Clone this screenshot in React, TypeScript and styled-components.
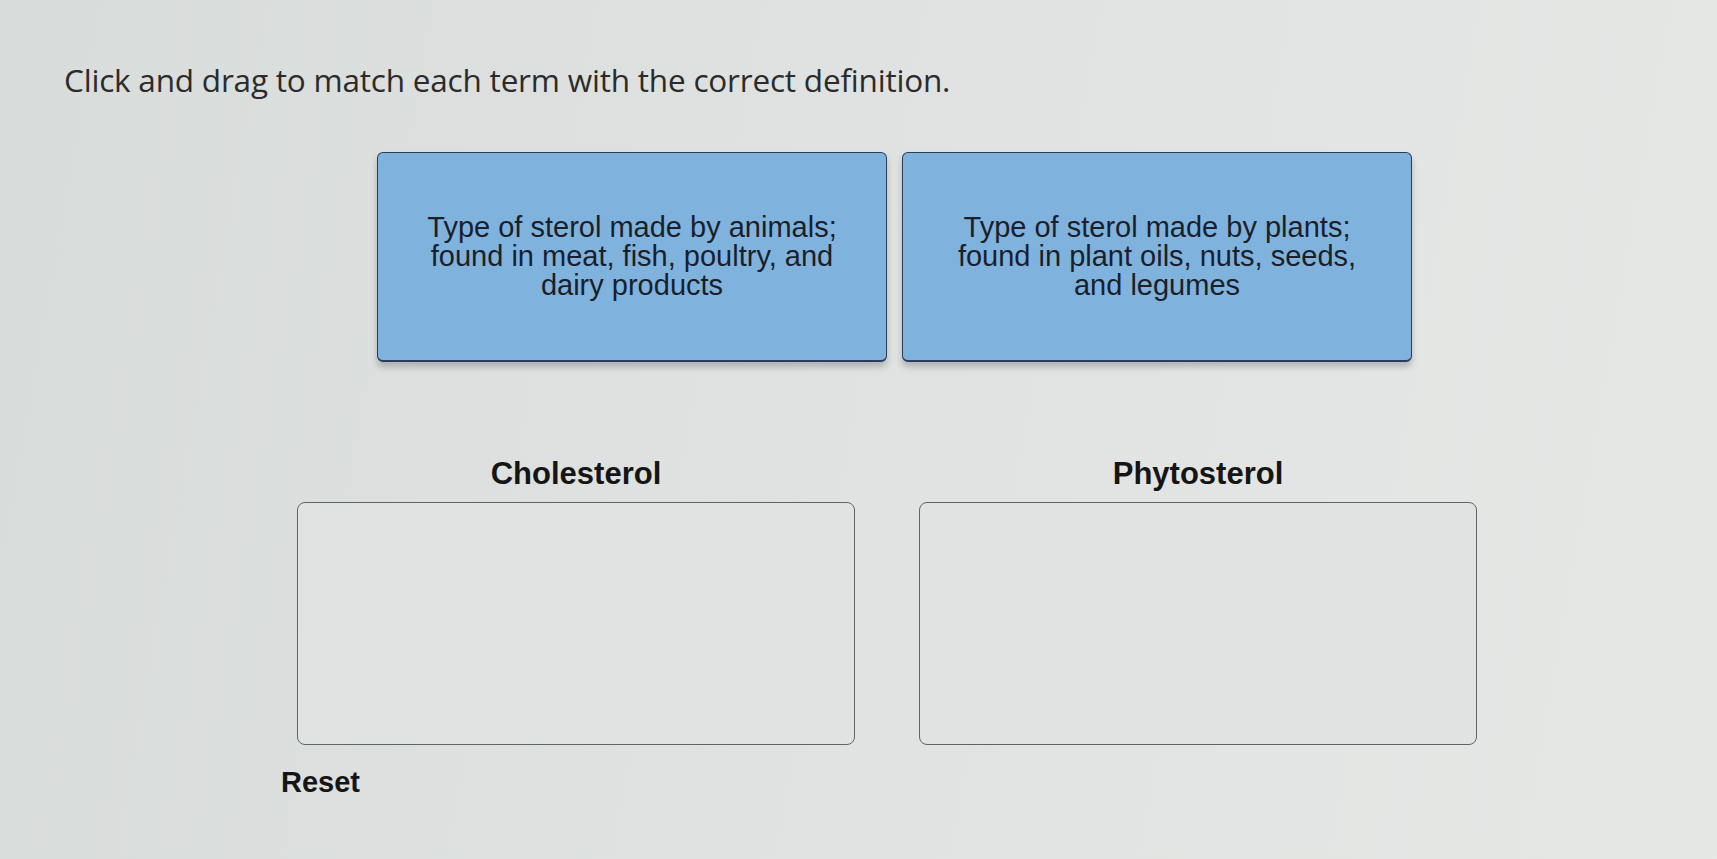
import React from "react";
import styled, { createGlobalStyle } from "styled-components";

const GlobalStyle = createGlobalStyle`
  html, body {
    margin: 0;
    padding: 0;
    background: #dde0de;
  }
  body {
    font-family: "Liberation Sans", Arial, sans-serif;
    color: #1c1c1c;
  }
`;

const Page = styled.div`
  min-height: 859px;
  box-sizing: border-box;
  padding: 60px 0 0 64px;
  background: linear-gradient(100deg, #d8dcda 0%, #e0e3e1 55%, #e6e8e6 100%);
`;

const Prompt = styled.h1`
  margin: 0;
  font-family: "Open Sans", "Liberation Sans", sans-serif;
  font-weight: 400;
  font-size: 31.5px;
  line-height: 40px;
  letter-spacing: -0.2px;
  color: #2b2b2b;
`;

const Choices = styled.div`
  display: flex;
  gap: 15px;
  margin: 52px 0 0 313px;
`;

const ChoiceCard = styled.div`
  width: 510px;
  height: 210px;
  box-sizing: border-box;
  display: flex;
  align-items: center;
  justify-content: center;
  padding: 0 40px;
  background: #80b2de;
  border: 1.5px solid #2b3d5c;
  border-bottom-width: 2px;
  border-radius: 6px;
  box-shadow: 0 5px 6px rgba(90, 95, 100, 0.35);
  text-align: center;
  font-size: 29px;
  line-height: 29px;
  color: #1a1f2a;
  cursor: grab;
`;

const Targets = styled.div`
  display: flex;
  gap: 64px;
  margin: 95px 0 0 233px;
`;

const Target = styled.div`
  width: 558px;
  display: flex;
  flex-direction: column;
  align-items: center;
`;

const Term = styled.div`
  font-weight: 700;
  font-size: 31px;
  line-height: 34px;
  color: #151515;
`;

const DropZone = styled.div`
  width: 100%;
  height: 243px;
  margin-top: 11px;
  box-sizing: border-box;
  border: 1.5px solid #5f6467;
  border-radius: 8px;
  background: #e0e3e1;
`;

const ResetButton = styled.button`
  margin: 20px 0 0 217px;
  padding: 0;
  border: none;
  background: none;
  font-family: "Liberation Sans", Arial, sans-serif;
  font-weight: 700;
  font-size: 29px;
  line-height: 34px;
  color: #151515;
  cursor: pointer;
`;

const definitions = [
  "Type of sterol made by animals; found in meat, fish, poultry, and dairy products",
  "Type of sterol made by plants; found in plant oils, nuts, seeds, and legumes",
];

const terms = ["Cholesterol", "Phytosterol"];

export default function App() {
  return (
    <>
      <GlobalStyle />
      <Page>
        <Prompt>Click and drag to match each term with the correct definition.</Prompt>
        <Choices>
          {definitions.map((d) => (
            <ChoiceCard key={d}>{d}</ChoiceCard>
          ))}
        </Choices>
        <Targets>
          {terms.map((t) => (
            <Target key={t}>
              <Term>{t}</Term>
              <DropZone />
            </Target>
          ))}
        </Targets>
        <ResetButton>Reset</ResetButton>
      </Page>
    </>
  );
}
